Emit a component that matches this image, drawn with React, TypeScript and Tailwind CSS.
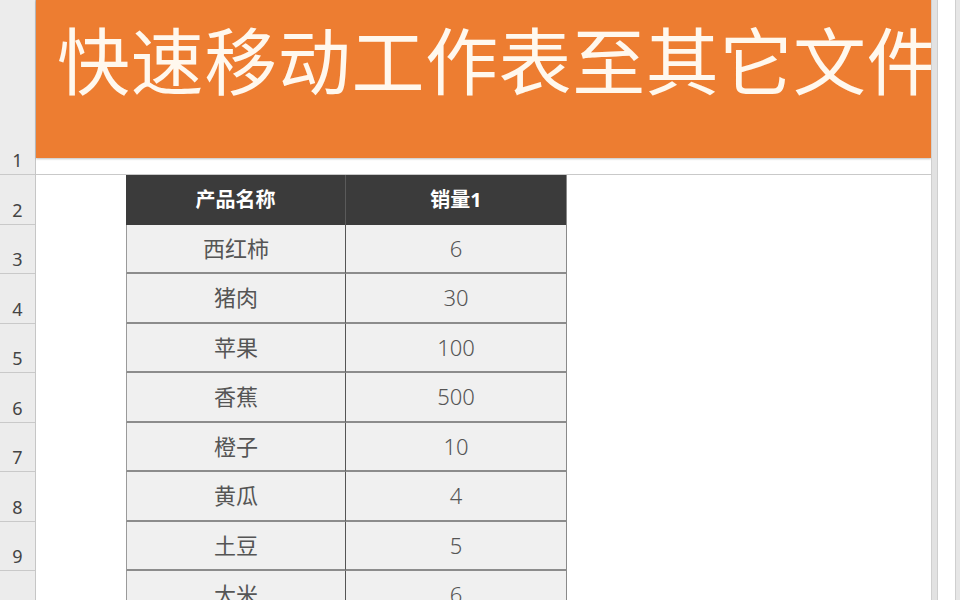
const rows: [string, string][] = [
  ["西红柿", "6"],
  ["猪肉", "30"],
  ["苹果", "100"],
  ["香蕉", "500"],
  ["橙子", "10"],
  ["黄瓜", "4"],
  ["土豆", "5"],
  ["大米", "6"],
];

const font = "font-['Noto_Sans','Noto_Sans_CJK_SC',sans-serif]";

function RowHead({ n, h }: { n: number; h: string }) {
  return (
    <div
      className={`flex ${h} shrink-0 items-end justify-center border-b border-[#c9c9c9] pb-[5px] text-[18px] leading-none text-[#444]`}
    >
      {n}
    </div>
  );
}

export default function App() {
  return (
    <div className={`flex h-[600px] w-[960px] overflow-hidden bg-white ${font}`}>
      {/* row headers */}
      <div className="flex w-[36px] shrink-0 flex-col border-r border-[#c6c6c6] bg-[#ececec]">
        <RowHead n={1} h="h-[175px]" />
        {[2, 3, 4, 5, 6, 7, 8, 9, 10].map((n) => (
          <RowHead key={n} n={n} h="h-[49.5px]" />
        ))}
      </div>

      {/* sheet */}
      <div className="flex w-[895px] shrink-0 flex-col">
        <div className="flex h-[175px] shrink-0 flex-col border-b border-[#c9c9c9]">
          <div className="flex h-[158px] items-start overflow-hidden bg-[#ed7d31] pl-[21px] pt-[9px] shadow-[0_1px_2px_rgba(0,0,0,0.25)]">
            <span className="whitespace-nowrap font-['Noto_Sans_CJK_SC',sans-serif] text-[73px] font-normal leading-[96px] tracking-[0.6px] text-[#fff8ee]">
              快速移动工作表至其它文件
            </span>
          </div>
        </div>

        {/* header row */}
        <div className="flex h-[49.5px] shrink-0">
          <div className="w-[90px] shrink-0" />
          <div className="flex w-[220px] items-center justify-center border-r border-[#5a5a5a] bg-[#3b3b3b] text-[20px] font-bold text-white">
            产品名称
          </div>
          <div className="flex w-[221px] items-center justify-center border-r border-[#8a8a8a] bg-[#3b3b3b] text-[20px] font-bold text-white">
            销量1
          </div>
        </div>

        {rows.map(([name, qty]) => (
          <div key={name} className="flex h-[49.5px] shrink-0">
            <div className="w-[90px] shrink-0" />
            <div className="flex w-[220px] items-center justify-center border-b-2 border-l border-r border-b-[#8c8c8c] border-l-[#9a9a9a] border-r-[#555] bg-[#f0f0f0] text-[22px] text-[#555]">
              {name}
            </div>
            <div className="flex w-[221px] items-center justify-center border-b-2 border-r border-b-[#8c8c8c] border-r-[#8a8a8a] bg-[#f0f0f0] text-[22px] font-light text-[#555]">
              {qty}
            </div>
          </div>
        ))}
      </div>

      {/* right edge */}
      <div className="w-[7px] shrink-0 border-x border-[#cfcfcf] bg-[#e2e2e2]" />
      <div className="w-[17px] shrink-0 bg-white" />
      <div className="w-[5px] shrink-0 border-l border-[#cfcfcf] bg-[#e6e6e6]" />
    </div>
  );
}
